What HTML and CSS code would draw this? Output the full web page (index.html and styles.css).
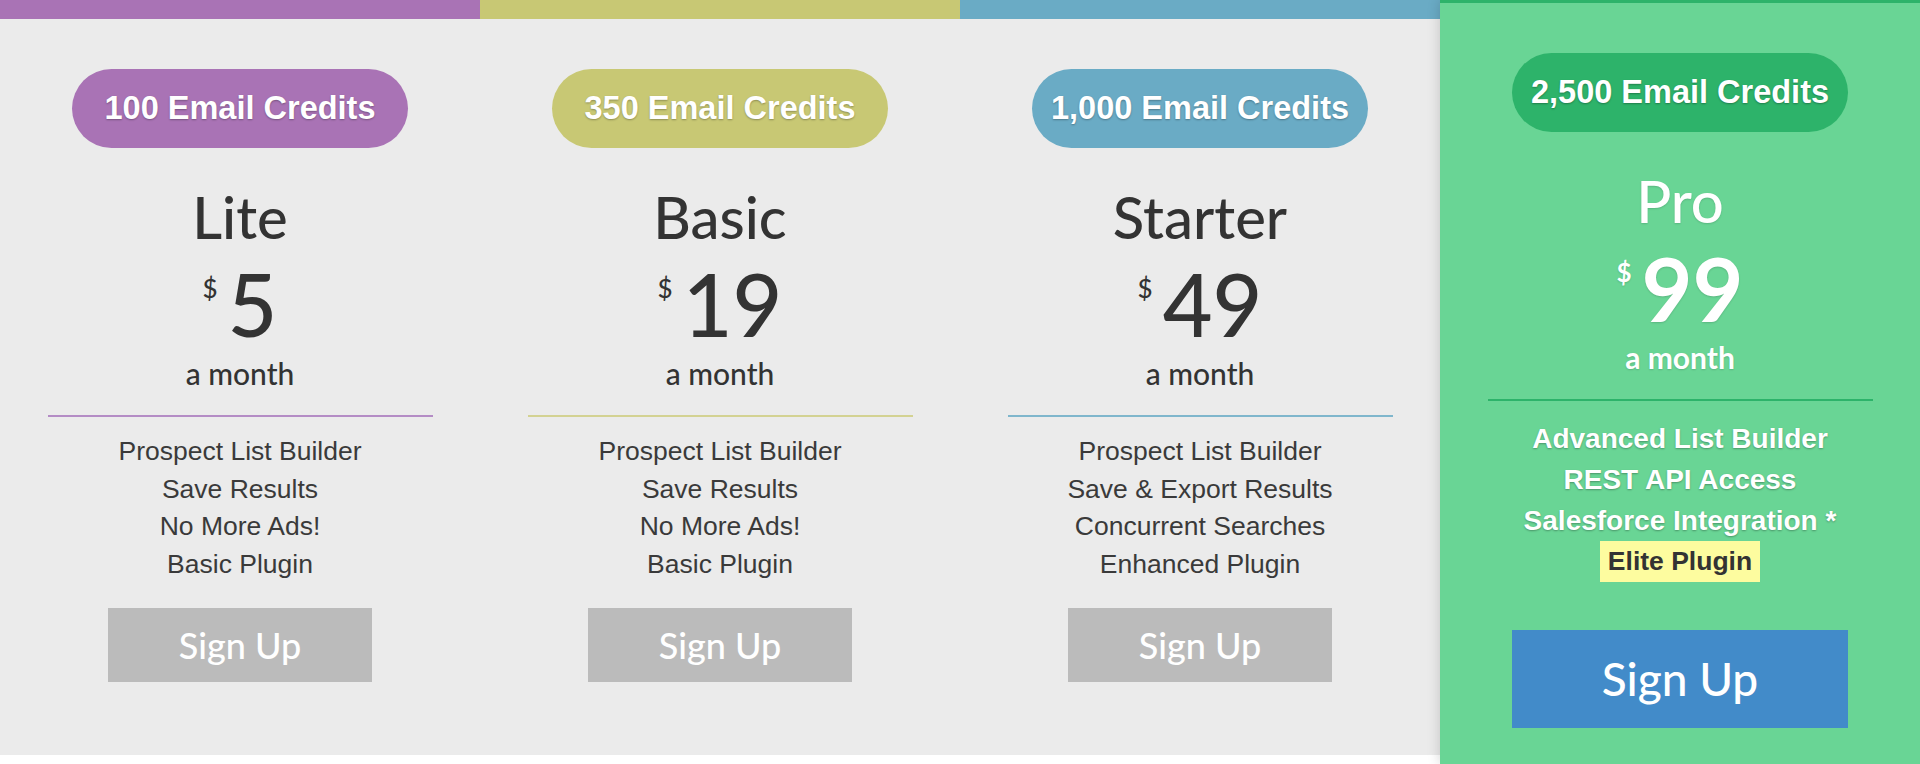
FILE: index.html
```html
<!DOCTYPE html>
<html>
<head>
<meta charset="utf-8">
<link rel="stylesheet" href="styles.css">
</head>
<body>
<div class="plans">
  <section class="plan plan-lite">
    <div class="pill">100 Email Credits</div>
    <h2 class="name">Lite</h2>
    <div class="price"><span class="cur">$</span><span class="amt">5</span></div>
    <div class="per">a month</div>
    <hr class="rule">
    <ul class="features">
      <li>Prospect List Builder</li>
      <li>Save Results</li>
      <li>No More Ads!</li>
      <li>Basic Plugin</li>
    </ul>
    <a class="btn">Sign Up</a>
  </section>
  <section class="plan plan-basic">
    <div class="pill">350 Email Credits</div>
    <h2 class="name">Basic</h2>
    <div class="price"><span class="cur">$</span><span class="amt">19</span></div>
    <div class="per">a month</div>
    <hr class="rule">
    <ul class="features">
      <li>Prospect List Builder</li>
      <li>Save Results</li>
      <li>No More Ads!</li>
      <li>Basic Plugin</li>
    </ul>
    <a class="btn">Sign Up</a>
  </section>
  <section class="plan plan-starter">
    <div class="pill">1,000 Email Credits</div>
    <h2 class="name">Starter</h2>
    <div class="price"><span class="cur">$</span><span class="amt">49</span></div>
    <div class="per">a month</div>
    <hr class="rule">
    <ul class="features">
      <li>Prospect List Builder</li>
      <li>Save &amp; Export Results</li>
      <li>Concurrent Searches</li>
      <li>Enhanced Plugin</li>
    </ul>
    <a class="btn">Sign Up</a>
  </section>
  <section class="plan plan-pro">
    <div class="pill">2,500 Email Credits</div>
    <h2 class="name">Pro</h2>
    <div class="price"><span class="cur">$</span><span class="amt">99</span></div>
    <div class="per">a month</div>
    <hr class="rule">
    <ul class="features">
      <li>Advanced List Builder</li>
      <li>REST API Access</li>
      <li>Salesforce Integration *</li>
      <li><mark class="hl">Elite Plugin</mark></li>
    </ul>
    <a class="btn">Sign Up</a>
  </section>
</div>
</body>
</html>
```

FILE: styles.css
```css
* { box-sizing: border-box; }
html, body { margin: 0; padding: 0; background: #ffffff; }
body { width: 1920px; height: 764px; overflow: hidden; }

.plans {
  display: flex;
  align-items: flex-start;
  width: 1920px;
}

.plan {
  width: 480px;
  height: 755px;
  background: #ebebeb;
  border-top: 19px solid #a973b5;
  display: flex;
  flex-direction: column;
  align-items: center;
  font-family: "Lato", "Liberation Sans", sans-serif;
  font-weight: 500;
  color: #333333;
}

.plan-basic { border-top-color: #c8c874; }
.plan-starter { border-top-color: #6aabc5; }

.pill {
  margin-top: 50px;
  width: 336px;
  height: 79px;
  border-radius: 40px;
  background: #a973b5;
  color: #ffffff;
  font-family: "Liberation Sans", Arial, sans-serif;
  font-weight: bold;
  font-size: 32.5px;
  line-height: 79px;
  text-align: center;
  text-shadow: 0 1px 2px rgba(0, 0, 0, 0.3);
}
.plan-basic .pill { background: #c8c874; }
.plan-starter .pill { background: #6aabc5; }

.name {
  margin: 40px 0 0;
  font-weight: 500;
  font-size: 58px;
  line-height: 58px;
}

.price {
  margin-top: 15px;
  display: flex;
  align-items: flex-start;
  height: 86px;
}
.cur {
  font-size: 26px;
  line-height: 26px;
  margin-top: 14px;
  margin-right: 10px;
}
.amt {
  font-size: 86px;
  line-height: 86px;
}

.per {
  margin-top: 11px;
  font-size: 30px;
  line-height: 30px;
}

.rule {
  margin: 27px 0 0;
  width: 385px;
  height: 2px;
  border: 0;
  background: #b48cc5;
}
.plan-basic .rule { background: #d3d292; }
.plan-starter .rule { background: #7fb6cc; }

.features {
  list-style: none;
  margin: 16px 0 0;
  padding: 0;
  text-align: center;
  font-family: "Liberation Sans", Arial, sans-serif;
  font-weight: normal;
  font-size: 26.5px;
  line-height: 37.5px;
  color: #3a3a3a;
}

.btn {
  display: block;
  margin-top: 25px;
  width: 264px;
  height: 74px;
  background: #bbbbbb;
  color: #ffffff;
  font-size: 36px;
  line-height: 74px;
  text-align: center;
}

/* Pro plan (highlighted) */
.plan-pro {
  position: relative;
  z-index: 1;
  height: 764px;
  background: #69d595;
  border-top: 3px solid #2db36a;
  color: #ffffff;
  box-shadow: 0 0 12px rgba(0, 0, 0, 0.18);
}
.plan-pro .pill { background: #2db36a; }
.plan-pro .name,
.plan-pro .price,
.plan-pro .per {
  text-shadow: 0 1px 2px rgba(0, 0, 0, 0.15);
}
.plan-pro .cur { font-weight: bold; }
.plan-pro .amt { font-weight: bold; font-size: 88px; }
.plan-pro .per { font-weight: bold; }
.plan-pro .rule { background: #2db36a; }
.plan-pro .features {
  margin-top: 17px;
  font-size: 28px;
  line-height: 41px;
  font-weight: bold;
  color: #ffffff;
  text-shadow: 0 1px 2px rgba(0, 0, 0, 0.3);
}
.hl {
  display: inline-block;
  background: #fdfc9f;
  color: #333333;
  font-size: 26.5px;
  padding: 0 8px;
  text-shadow: none;
  vertical-align: top;
}
.plan-pro .btn {
  margin-top: 48px;
  width: 336px;
  height: 98px;
  background: #428bc9;
  font-size: 46px;
  line-height: 98px;
}
```
